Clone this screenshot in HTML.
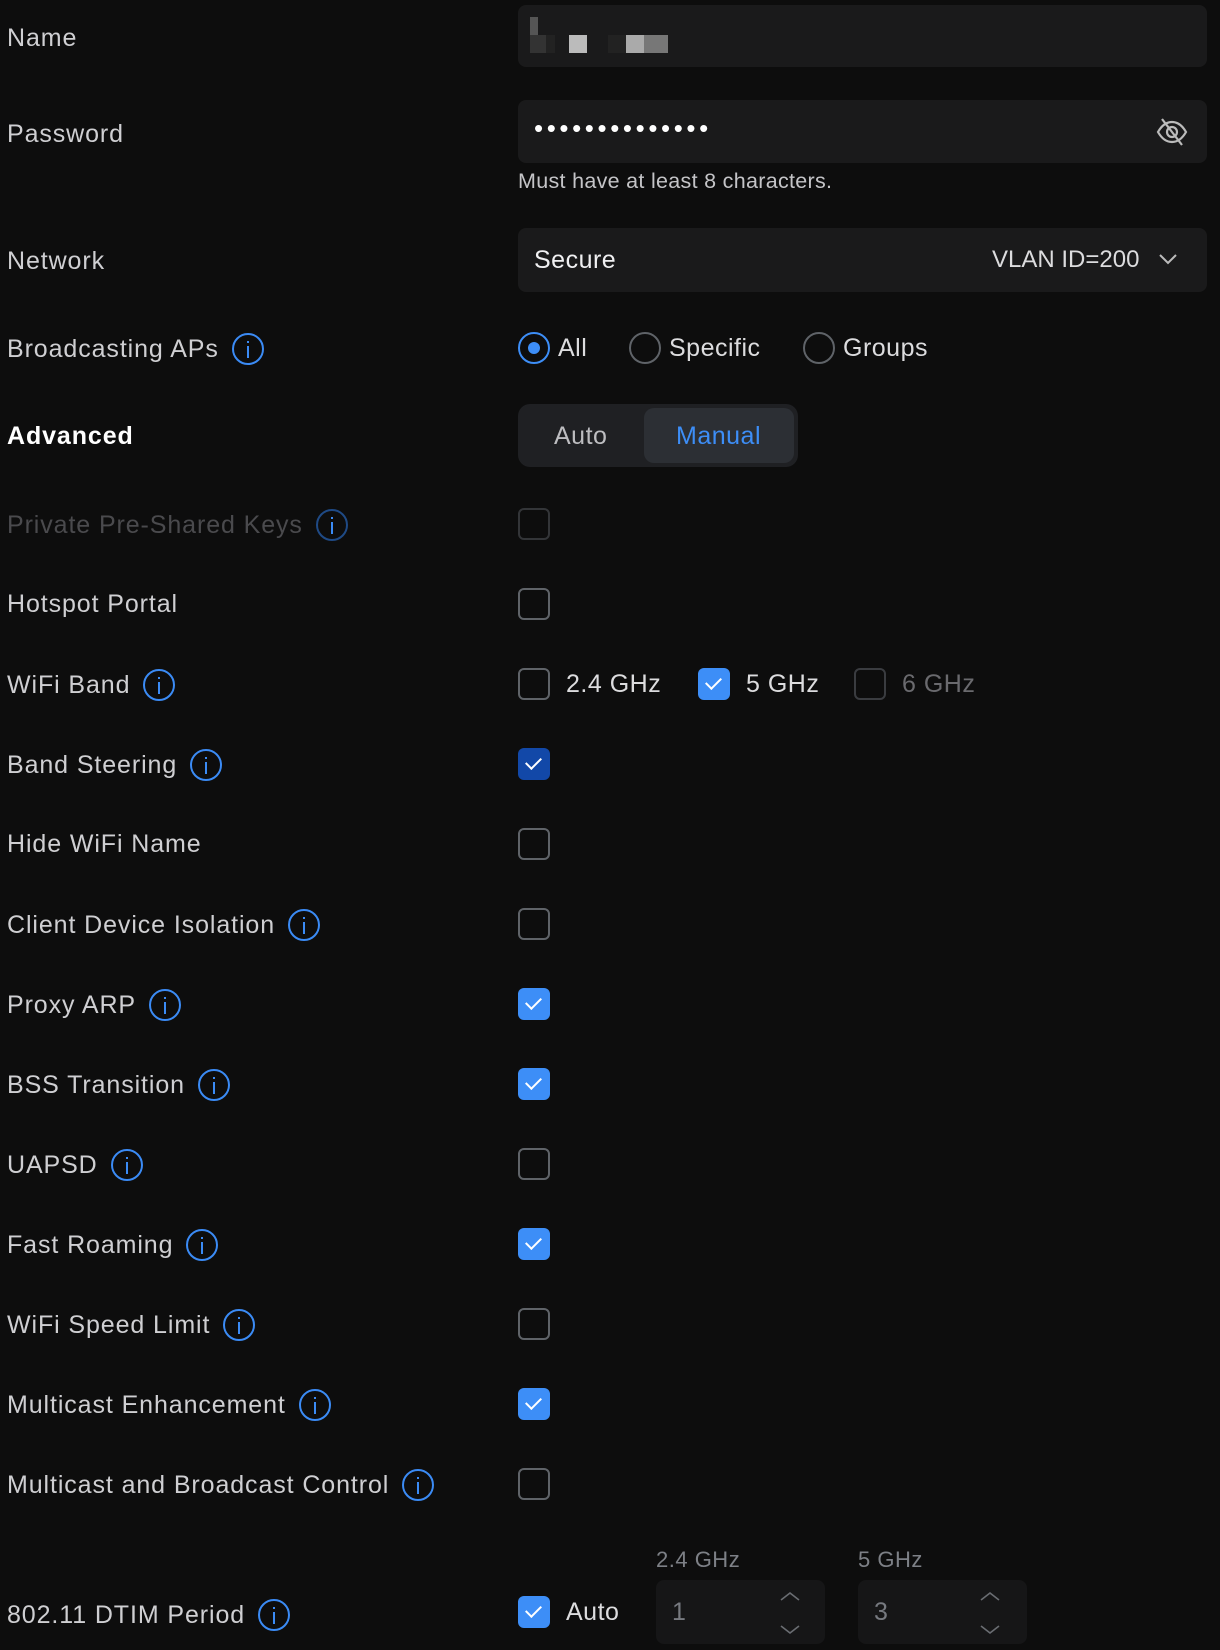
<!DOCTYPE html>
<html><head><style>
body{margin:0;width:1220px;height:1650px;background:#0d0d0d;font-family:"Liberation Sans",sans-serif;color:#d4d4d6;position:relative;overflow:hidden}
.a{position:absolute}
.l{position:absolute;left:7px;font-size:25px;line-height:30px;color:#cfcfd2;white-space:nowrap;display:flex;align-items:center;letter-spacing:0.9px}
.i{display:inline-block;width:32px;height:32px;border:2px solid #3b8bf5;border-radius:50%;box-sizing:border-box;margin-left:13px;position:relative}
.i:before{content:"";position:absolute;left:13px;top:6px;width:2px;height:2px;background:#3b8bf5}
.i:after{content:"";position:absolute;left:13px;top:11px;width:2px;height:12px;background:#3b8bf5}
.inp{position:absolute;left:518px;width:689px;background:#1a1a1b;border-radius:8px}
.cb{position:absolute;width:32px;height:32px;box-sizing:border-box;border:2px solid #5f6368;border-radius:6px}
.cb.on{background:#3d8ef7;border:none}
.cb.on:after{content:"";position:absolute;left:11px;top:6px;width:7px;height:13px;border:solid #fff;border-width:0 2.5px 2.5px 0;transform:rotate(45deg)}
.t{position:absolute;font-size:25px;color:#dcdcde;line-height:30px;letter-spacing:0.5px}
.rd{position:absolute;width:32px;height:32px;box-sizing:border-box;border:2px solid #5f6368;border-radius:50%}
</style></head><body>
<div class="l" style="top:23px">Name</div>
<div class="inp" style="top:5px;height:62px"></div>
<div class="a" style="left:530px;top:17px;width:8px;height:18px;background:#555"></div>
<div class="a" style="left:530px;top:35px;width:16px;height:18px;background:#333"></div>
<div class="a" style="left:546px;top:35px;width:9px;height:18px;background:#222"></div>
<div class="a" style="left:569px;top:35px;width:18px;height:18px;background:#bbb"></div>
<div class="a" style="left:608px;top:35px;width:18px;height:18px;background:#222"></div>
<div class="a" style="left:626px;top:35px;width:18px;height:18px;background:#aaa"></div>
<div class="a" style="left:644px;top:35px;width:24px;height:18px;background:#777"></div>

<div class="l" style="top:119px">Password</div>
<div class="inp" style="top:100px;height:63px"></div>
<div class="t" style="left:534px;top:113px;letter-spacing:3.6px;color:#fff;font-size:26px">••••••••••••••</div>
<svg class="a" style="left:1155px;top:115px" width="34" height="34" viewBox="0 0 34 34" fill="none" stroke="#bbb" stroke-width="2.2"><path d="M3 17c4-7 9-10 14-10s10 3 14 10c-4 7-9 10-14 10S7 24 3 17z"/><circle cx="17" cy="17" r="5"/><path d="M7 4l20 26"/></svg>
<div class="t" style="left:518px;top:166px;font-size:21.5px;color:#c4c4c7;letter-spacing:0.3px">Must have at least 8 characters.</div>

<div class="l" style="top:246px">Network</div>
<div class="inp" style="top:228px;height:64px"></div>
<div class="t" style="left:534px;top:245px;color:#f0f0f2">Secure</div>
<div class="t" style="left:992px;top:245px;font-size:24px;letter-spacing:0">VLAN ID=200</div>
<svg class="a" style="left:1158px;top:252px" width="20" height="14" viewBox="0 0 20 14" fill="none" stroke="#bbb" stroke-width="2"><path d="M2 3l8 8 8-8"/></svg>

<div class="l" style="top:333px">Broadcasting APs<span class="i"></span></div>
<div class="rd" style="left:518px;top:332px;border-color:#3d8ef7"></div>
<div class="a" style="left:528px;top:342px;width:12px;height:12px;border-radius:50%;background:#3d8ef7"></div>
<div class="t" style="left:558px;top:333px">All</div>
<div class="rd" style="left:629px;top:332px"></div>
<div class="t" style="left:669px;top:333px">Specific</div>
<div class="rd" style="left:803px;top:332px"></div>
<div class="t" style="left:843px;top:333px">Groups</div>

<div class="l" style="top:421px;font-weight:bold;color:#fff">Advanced</div>
<div class="a" style="left:518px;top:404px;width:280px;height:63px;background:#1f2023;border-radius:12px"></div>
<div class="a" style="left:644px;top:408px;width:150px;height:55px;background:#2c2f34;border-radius:10px"></div>
<div class="t" style="left:554px;top:421px;color:#bdbdc0">Auto</div>
<div class="t" style="left:676px;top:421px;color:#3d8ef7">Manual</div>

<div class="l" style="top:509px;color:#4a4a4d">Private Pre-Shared Keys<span class="i" style="border-color:#1f4a85"></span></div>
<div class="cb" style="left:518px;top:508px;border-color:#333538"></div>

<div class="l" style="top:589px">Hotspot Portal</div>
<div class="cb" style="left:518px;top:588px"></div>

<div class="l" style="top:669px">WiFi Band<span class="i"></span></div>
<div class="cb" style="left:518px;top:668px"></div>
<div class="t" style="left:566px;top:669px">2.4 GHz</div>
<div class="cb on" style="left:698px;top:668px"></div>
<div class="t" style="left:746px;top:669px">5 GHz</div>
<div class="cb" style="left:854px;top:668px;border-color:#3a3c40"></div>
<div class="t" style="left:902px;top:669px;color:#6a6a6e">6 GHz</div>

<div class="l" style="top:749px">Band Steering<span class="i"></span></div>
<div class="cb on" style="left:518px;top:748px;background:#1248a8"></div>

<div class="l" style="top:829px">Hide WiFi Name</div>
<div class="cb" style="left:518px;top:828px"></div>
<div class="l" style="top:909px">Client Device Isolation<span class="i"></span></div>
<div class="cb" style="left:518px;top:908px"></div>
<div class="l" style="top:989px">Proxy ARP<span class="i"></span></div>
<div class="cb on" style="left:518px;top:988px"></div>
<div class="l" style="top:1069px">BSS Transition<span class="i"></span></div>
<div class="cb on" style="left:518px;top:1068px"></div>
<div class="l" style="top:1149px">UAPSD<span class="i"></span></div>
<div class="cb" style="left:518px;top:1148px"></div>
<div class="l" style="top:1229px">Fast Roaming<span class="i"></span></div>
<div class="cb on" style="left:518px;top:1228px"></div>
<div class="l" style="top:1309px">WiFi Speed Limit<span class="i"></span></div>
<div class="cb" style="left:518px;top:1308px"></div>
<div class="l" style="top:1389px">Multicast Enhancement<span class="i"></span></div>
<div class="cb on" style="left:518px;top:1388px"></div>
<div class="l" style="top:1469px">Multicast and Broadcast Control<span class="i"></span></div>
<div class="cb" style="left:518px;top:1468px"></div>

<div class="t" style="left:656px;top:1545px;font-size:22px;color:#7d8086">2.4 GHz</div>
<div class="t" style="left:858px;top:1545px;font-size:22px;color:#7d8086">5 GHz</div>
<div class="l" style="top:1599px">802.11 DTIM Period<span class="i"></span></div>
<div class="cb on" style="left:518px;top:1596px"></div>
<div class="t" style="left:566px;top:1597px">Auto</div>
<div class="a" style="left:656px;top:1580px;width:169px;height:64px;background:#161617;border-radius:8px"></div>
<div class="a" style="left:858px;top:1580px;width:169px;height:64px;background:#161617;border-radius:8px"></div>
<div class="t" style="left:672px;top:1597px;color:#777a80">1</div>
<div class="t" style="left:874px;top:1597px;color:#777a80">3</div>
<svg class="a" style="left:780px;top:1590px" width="240" height="46" viewBox="0 0 240 46" fill="none" stroke="#6a6d72" stroke-width="1.6"><path d="M1 10l9-7 9 7M1 36l9 7 9-7M201 10l9-7 9 7M201 36l9 7 9-7"/></svg>
</body></html>
